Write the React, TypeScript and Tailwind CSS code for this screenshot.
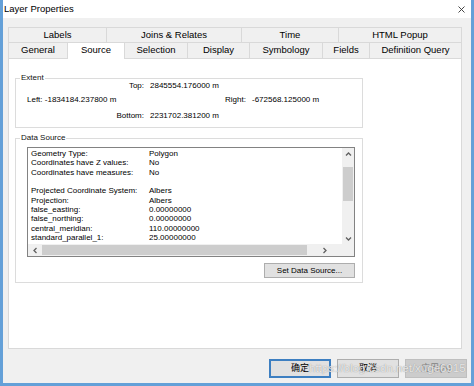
const font = "font-['Liberation_Sans','Noto_Sans_CJK_SC',sans-serif]";

const topTabs = [
  { label: "Labels", w: "w-[99px]" },
  { label: "Joins & Relates", w: "w-[135px]" },
  { label: "Time", w: "w-[97px]" },
  { label: "HTML Popup", w: "w-[123px]" },
];

const mainTabs = [
  { label: "General", w: "w-[60px]" },
  { label: "Source", w: "w-[57px]", active: true },
  { label: "Selection", w: "w-[63px]" },
  { label: "Display", w: "w-[62px]" },
  { label: "Symbology", w: "w-[73px]" },
  { label: "Fields", w: "w-[47px]" },
  { label: "Definition Query", w: "w-[92px]" },
];

const sourceRows: [string, string][] = [
  ["Geometry Type:", "Polygon"],
  ["Coordinates have Z values:", "No"],
  ["Coordinates have measures:", "No"],
  ["", ""],
  ["Projected Coordinate System:", "Albers"],
  ["Projection:", "Albers"],
  ["false_easting:", "0.00000000"],
  ["false_northing:", "0.00000000"],
  ["central_meridian:", "110.00000000"],
  ["standard_parallel_1:", "25.00000000"],
];

function Chevron({ dir }: { dir: "up" | "down" | "left" | "right" }) {
  const d = {
    up: "M1 4.5 L3.5 2 L6 4.5",
    down: "M1 2.5 L3.5 5 L6 2.5",
    left: "M4.5 1 L2 3.5 L4.5 6",
    right: "M2.5 1 L5 3.5 L2.5 6",
  }[dir];
  return (
    <svg width="7" height="7" viewBox="0 0 7 7">
      <path d={d} fill="none" stroke="#606060" strokeWidth="1.3" />
    </svg>
  );
}

function GroupBox({ title, className, children }: { title: string; className: string; children: React.ReactNode }) {
  return (
    <div className={`relative border border-[#dcdcdc] ${className}`}>
      <span className="absolute left-[4px] -top-[6px] bg-white px-[1px] text-[8px] leading-[10px] text-[#111]">
        {title}
      </span>
      {children}
    </div>
  );
}

export default function App() {
  return (
    <div className={`relative flex h-[386px] w-[474px] flex-col border-x-[3px] border-b-[3px] border-[#64a0d8] bg-[#f0f0f0] text-black ${font}`}>
      {/* title bar */}
      <div className="flex h-[18px] items-center justify-between bg-white pl-[1px] pr-[6px]">
        <span className="text-[9.5px]">Layer Properties</span>
        <svg width="7" height="7" viewBox="0 0 7 7">
          <path d="M0.5 0.5 L6.5 6.5 M6.5 0.5 L0.5 6.5" stroke="#333" strokeWidth="0.9" />
        </svg>
      </div>

      <div className="mt-[9px] flex w-[454px] flex-col pl-[5px] box-content">
        <div className="flex h-[15px]">
          {topTabs.map((t, i) => (
            <div
              key={t.label}
              className={`${t.w} flex items-center justify-center border-t border-r border-[#d9d9d9] text-[9.5px] ${i === 0 ? "border-l" : ""}`}
            >
              {t.label}
            </div>
          ))}
        </div>
        <div className="flex h-[16px] items-start">
          {mainTabs.map((t, i) => (
            <div
              key={t.label}
              className={`${t.w} flex items-center justify-center border-t border-r border-[#d9d9d9] text-[9.5px] ${i === 0 ? "border-l" : ""} ${t.active ? "relative z-10 h-[17px] bg-white pb-px" : "h-[16px]"}`}
            >
              {t.label}
            </div>
          ))}
        </div>

        {/* panel */}
        <div className="flex h-[291px] flex-col border border-[#d9d9d9] bg-white pl-[6px]">
          <GroupBox title="Extent" className="mt-[19px] h-[50px] w-[348px] text-[8px]">
            <div className="flex h-[13px] items-end">
              <span className="w-[128px] text-right">Top:</span>
              <span className="ml-[6px]">2845554.176000 m</span>
            </div>
            <div className="flex h-[16px] items-center">
              <span className="ml-[11px] w-[198px]">Left: -1834184.237800 m</span>
              <span className="w-[27px]">Right:</span>
              <span>-672568.125000 m</span>
            </div>
            <div className="flex h-[16px] items-center">
              <span className="w-[128px] text-right">Bottom:</span>
              <span className="ml-[6px]">2231702.381200 m</span>
            </div>
          </GroupBox>

          <GroupBox title="Data Source" className="mt-[10px] w-[348px] pb-[4px] pl-[11px] pt-[8px]">
            <div className="flex h-[110px] w-[328px] flex-col border border-[#828282] bg-white">
              <div className="flex h-[96px]">
                <div className="flex-1 overflow-hidden pl-[3px] pt-[1px] text-[8px] leading-[9.35px]">
                  {sourceRows.map(([k, v], i) => (
                    <div key={i} className="flex h-[9.35px]">
                      <span className="w-[118px] shrink-0">{k}</span>
                      <span>{v}</span>
                    </div>
                  ))}
                </div>
                <div className="flex w-[12px] flex-col items-center bg-[#f0f0f0]">
                  <div className="flex h-[12px] items-center justify-center">
                    <Chevron dir="up" />
                  </div>
                  <div className="mt-[7px] h-[34px] w-[10px] bg-[#cdcdcd]" />
                  <div className="flex-1" />
                  <div className="flex h-[12px] items-center justify-center">
                    <Chevron dir="down" />
                  </div>
                </div>
              </div>
              <div className="flex h-[12px]">
                <div className="flex flex-1 items-center bg-[#f0f0f0]">
                  <div className="flex w-[14px] items-center justify-center">
                    <Chevron dir="left" />
                  </div>
                  <div className="h-[10px] w-[265px] bg-[#cdcdcd]" />
                  <div className="flex flex-1 items-center justify-center">
                    <Chevron dir="right" />
                  </div>
                </div>
                <div className="w-[12px] bg-[#f0f0f0]" />
              </div>
            </div>
            <div className="mt-[6px] flex w-[328px] justify-end">
              <button className="flex h-[15px] w-[91px] items-center justify-center border border-[#adadad] bg-[#e1e1e1] text-[8px]">
                Set Data Source...
              </button>
            </div>
          </GroupBox>
        </div>
      </div>

      {/* buttons */}
      <div className="mt-[10px] flex justify-end gap-[6px] pr-[4px]">
        <button className="flex h-[19px] w-[62px] items-center justify-center border-2 border-[#3d7fc1] bg-[#e1e1e1] text-[9px]">
          确定
        </button>
        <button className="flex h-[19px] w-[62px] items-center justify-center border border-[#adadad] bg-[#e1e1e1] text-[9px]">
          取消
        </button>
        <button className="flex h-[19px] w-[62px] items-center justify-center border border-[#bfbfbf] bg-[#cccccc] text-[9px] text-[#838383]">
          应用(A)
        </button>
      </div>

      <span className="pointer-events-none absolute left-[306px] top-[361px] text-[11.5px] leading-[14px] text-white/80 [text-shadow:0_0_1px_#777]">
        https://blog.csdn.net/xuge6915
      </span>
    </div>
  );
}
